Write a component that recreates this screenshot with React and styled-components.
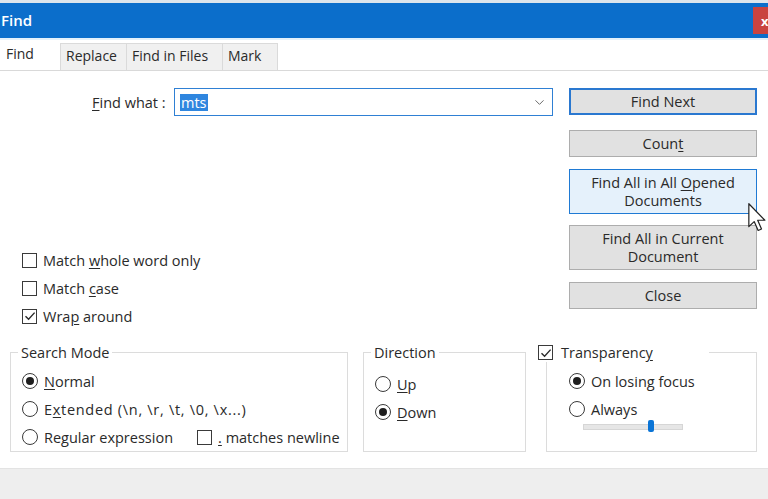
import styled, { createGlobalStyle } from 'styled-components';
import { ChevronDown } from 'lucide-react';

const GlobalStyle = createGlobalStyle`
  html, body { margin: 0; padding: 0; background: #ffffff; }
  body { font-family: 'Open Sans', 'Noto Sans', sans-serif; }
`

const tabs = [
  { label: 'Find', width: 60, active: true },
  { label: 'Replace', width: 67 },
  { label: 'Find in Files', width: 97 },
  { label: 'Mark', width: 56 },
]

function Check({ checked }) {
  return (
    <Box>
      {checked && (
        <svg width="12" height="12" viewBox="0 0 12 12">
          <path d="M1.5 6.2 L4.6 9.3 L10.6 2.6" fill="none" stroke="#2a2a2a" strokeWidth="1.4" />
        </svg>
      )}
    </Box>
  )
}

function Radio({ checked }) {
  return <Circle>{checked && <Dot />}</Circle>
}

export default function App() {
  return (
    <Window>
      <GlobalStyle />

      {/* title bar */}
      <TitleBar>
        <Title>Find</Title>
        <CloseBtn>x</CloseBtn>
      </TitleBar>

      {/* tabs */}
      <TabStrip>
        {tabs.map((t) => (
          <Tab key={t.label} $active={t.active} $w={t.width}>{t.label}</Tab>
        ))}
      </TabStrip>

      <Body>
        <LeftPane>
          <FindRow>
            <Label><U>F</U>ind what :</Label>
            <Input>
              <Selected>mts</Selected>
              <ChevronDown size={15} color="#6a6a6a" strokeWidth={1.6} />
            </Input>
          </FindRow>

          <CheckList>
            <Row>
              <Check />
              <Text>Match <U>w</U>hole word only</Text>
            </Row>
            <Row>
              <Check />
              <Text>Match <U>c</U>ase</Text>
            </Row>
            <Row>
              <Check checked />
              <Text>Wra<U>p</U> around</Text>
            </Row>
          </CheckList>
        </LeftPane>

        <ButtonColumn>
          <Button $variant="default" $h={27}><span>Find Next</span></Button>
          <Button $h={27} $mt={15}><span>Coun<U>t</U></span></Button>
          <Button $variant="hover" $h={45} $mt={12}><span>Find All in All <U>O</U>pened<br />Documents</span></Button>
          <Button $h={45} $mt={11}><span>Find All in Current<br />Document</span></Button>
          <Button $h={27} $mt={12}><span>Close</span></Button>
        </ButtonColumn>
      </Body>

      <GroupsRow>
        <Group $w={338} $mr={15}>
          <Legend>Search Mode</Legend>
          <Row>
            <Radio checked />
            <Text><U>N</U>ormal</Text>
          </Row>
          <Row>
            <Radio />
            <Text $wide>E<U>x</U>tended (\n, \r, \t, \0, \x...)</Text>
          </Row>
          <Row>
            <Radio />
            <Text>Re<U>g</U>ular expression</Text>
            <Spacer />
            <Check />
            <Text><U>.</U> matches newline</Text>
          </Row>
        </Group>

        <Group $w={163} $mr={20} $pt={3}>
          <Legend>Direction</Legend>
          <Row>
            <Radio />
            <Text><U>U</U>p</Text>
          </Row>
          <Row>
            <Radio checked />
            <Text><U>D</U>own</Text>
          </Row>
        </Group>

        <Group $w={211} $pl={22}>
          <CheckLegend>
            <Check checked />
            <Text>Transparenc<U>y</U></Text>
          </CheckLegend>
          <Row>
            <Radio checked />
            <Text>On losing focus</Text>
          </Row>
          <Row>
            <Radio />
            <Text>Always</Text>
          </Row>
          <Slider>
            <Track />
            <Thumb />
          </Slider>
        </Group>
      </GroupsRow>

      <Footer />

      <Cursor width="20" height="29" viewBox="0 0 13 19">
        <path d="M0.5 0.5 L0.5 15.5 L4 12.2 L6.6 18 L8.8 17 L6.3 11.3 L11 11.3 Z" fill="#ffffff" stroke="#222" strokeWidth="0.8" strokeLinejoin="round" />
      </Cursor>
    </Window>
  )
}

const Window = styled.div`
  position: relative;
  width: 768px;
  height: 499px;
  overflow: hidden;
  display: flex;
  flex-direction: column;
  background: #ffffff;
  color: #2a2a2a;
  font-size: 14.5px;
`
const TitleBar = styled.div`
  height: 35px;
  border-top: 3px solid #dde5ec;
  border-bottom: 2px solid #e4f1fb;
  background: #0b6ecb;
  display: flex;
  align-items: center;
  box-sizing: content-box;
`
const Title = styled.div`
  color: #ffffff;
  font-size: 15px;
  font-weight: 600;
  padding-left: 1px;
  margin-top: -2px;
`
const CloseBtn = styled.div`
  margin-left: auto;
  margin-right: -6px;
  width: 21px;
  height: 27px;
  background: #c9433f;
  color: #ffffff;
  font-size: 13px;
  font-weight: 700;
  display: flex;
  align-items: center;
  padding-left: 8px;
  box-sizing: border-box;
`
const TabStrip = styled.div`
  height: 30px;
  display: flex;
  align-items: flex-end;
  border-bottom: 1px solid #d9d9d9;
`
const Tab = styled.div`
  width: ${(p) => p.$w}px;
  height: ${(p) => (p.$active ? 30 : 27)}px;
  box-sizing: border-box;
  background: ${(p) => (p.$active ? '#ffffff' : '#f0f0f0')};
  border: 1px solid ${(p) => (p.$active ? '#ffffff' : '#dadada')};
  border-bottom: none;
  margin-right: ${(p) => (p.$active ? 0 : -1)}px;
  padding: ${(p) => (p.$active ? '4px 0 0 5px' : '3px 0 0 5px')};
  font-size: 14px;
  line-height: 18px;
  white-space: nowrap;
`
const Body = styled.div`
  display: flex;
  padding-top: 17px;
`
const LeftPane = styled.div`
  flex: 1;
  display: flex;
  flex-direction: column;
`
const FindRow = styled.div`
  display: flex;
  align-items: center;
  padding-left: 92px;
  height: 28px;
`
const Label = styled.span`
  white-space: nowrap;
  width: 76px;
`
const U = styled.span`
  text-decoration: underline;
  text-underline-offset: 2px;
`
const Input = styled.div`
  margin-left: 6px;
  width: 379px;
  height: 28px;
  box-sizing: border-box;
  border: 1px solid #2f80d4;
  display: flex;
  align-items: center;
  justify-content: space-between;
  padding: 0 5px 0 5px;
`
const Selected = styled.span`
  background: #2f86df;
  color: #ffffff;
  padding: 0 1px;
  line-height: 17px;
`
const CheckList = styled.div`
  margin-top: 130px;
  padding-left: 22px;
`
const Row = styled.div`
  display: flex;
  align-items: center;
  height: 28px;
  white-space: nowrap;
`
const Text = styled.span`
  margin-left: 6px;
  font-size: 14.5px;
  letter-spacing: ${(p) => (p.$wide ? '0.7px' : '0')};
`
const Spacer = styled.span`
  width: 24px;
`
const Box = styled.span`
  width: 15px;
  height: 15px;
  box-sizing: border-box;
  border: 1px solid #3a3a3a;
  background: #ffffff;
  display: flex;
  align-items: center;
  justify-content: center;
  flex-shrink: 0;
`
const Circle = styled.span`
  width: 16px;
  height: 16px;
  box-sizing: border-box;
  border: 1px solid #3a3a3a;
  border-radius: 50%;
  display: flex;
  align-items: center;
  justify-content: center;
  flex-shrink: 0;
`
const Dot = styled.span`
  width: 8px;
  height: 8px;
  border-radius: 50%;
  background: #1e1e1e;
`
const ButtonColumn = styled.div`
  width: 188px;
  margin-right: 11px;
  display: flex;
  flex-direction: column;
`
const Button = styled.div`
  height: ${(p) => p.$h}px;
  margin-top: ${(p) => p.$mt || 0}px;
  box-sizing: border-box;
  display: flex;
  align-items: center;
  justify-content: center;
  text-align: center;
  line-height: 18px;
  font-size: 14.5px;
  background: ${(p) => (p.$variant === 'hover' ? '#e5f1fb' : '#e1e1e1')};
  border: ${(p) =>
    p.$variant === 'default' ? '2px solid #2a78d0'
    : p.$variant === 'hover' ? '1px solid #1f7ad4'
    : '1px solid #adadad'};
`
const GroupsRow = styled.div`
  display: flex;
  padding-left: 10px;
  margin-top: 13px;
`
const Group = styled.fieldset`
  width: ${(p) => p.$w}px;
  min-width: 0;
  height: 109px;
  box-sizing: border-box;
  margin: 0 ${(p) => p.$mr || 0}px 0 0;
  padding: ${(p) => p.$pt || 0}px 0 0 ${(p) => p.$pl || 11}px;
  border: 1px solid #dcdcdc;
  flex-shrink: 0;
`
const Legend = styled.legend`
  padding: 0 3px;
  margin-left: -4px;
  font-size: 14.5px;
  line-height: 19px;
  margin-bottom: 5px;
`
const CheckLegend = styled.legend`
  display: flex;
  align-items: center;
  width: 171px;
  padding: 0;
  margin-left: -31px;
  line-height: 19px;
  margin-bottom: 5px;
  & > span:last-child { margin-left: 8px; }
`
const Slider = styled.div`
  position: relative;
  width: 100px;
  height: 16px;
  margin-left: 14px;
  margin-top: -4px;
  display: flex;
  align-items: center;
`
const Track = styled.div`
  width: 100%;
  height: 4px;
  background: #e6e6e6;
  border: 1px solid #d6d6d6;
`
const Thumb = styled.div`
  position: absolute;
  left: 65px;
  top: 1px;
  width: 6px;
  height: 12px;
  border-radius: 2px;
  background: #0a74d6;
`
const Footer = styled.div`
  margin-top: auto;
  height: 30px;
  background: #eeeeee;
  border-top: 1px solid #e3e3e3;
`
const Cursor = styled.svg`
  position: absolute;
  left: 748px;
  top: 203px;
`
